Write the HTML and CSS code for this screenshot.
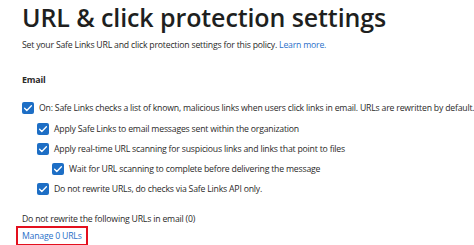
FILE: index.html
```html
<!DOCTYPE html>
<html>
<head>
<meta charset="utf-8">
<link rel="stylesheet" href="styles.css">
</head>
<body>
<div class="page">
  <h1 class="title">URL &amp; click protection settings</h1>
  <p class="intro">Set your Safe Links URL and click protection settings for this policy. <a class="link" href="#">Learn more.</a></p>
  <h2 class="section">Email</h2>
  <ul class="options">
    <li class="opt lvl0"><span class="cb"><svg viewBox="0 0 12 12"><path d="M2.6 6.3l2.2 2.2 4.6-4.8" fill="none" stroke="#fff" stroke-width="1.3" stroke-linecap="round" stroke-linejoin="round"/></svg></span><span>On: Safe Links checks a list of known, malicious links when users click links in email. URLs are rewritten by default.</span></li>
    <li class="opt lvl1"><span class="cb"><svg viewBox="0 0 12 12"><path d="M2.6 6.3l2.2 2.2 4.6-4.8" fill="none" stroke="#fff" stroke-width="1.3" stroke-linecap="round" stroke-linejoin="round"/></svg></span><span>Apply Safe Links to email messages sent within the organization</span></li>
    <li class="opt lvl1"><span class="cb"><svg viewBox="0 0 12 12"><path d="M2.6 6.3l2.2 2.2 4.6-4.8" fill="none" stroke="#fff" stroke-width="1.3" stroke-linecap="round" stroke-linejoin="round"/></svg></span><span>Apply real-time URL scanning for suspicious links and links that point to files</span></li>
    <li class="opt lvl2"><span class="cb"><svg viewBox="0 0 12 12"><path d="M2.6 6.3l2.2 2.2 4.6-4.8" fill="none" stroke="#fff" stroke-width="1.3" stroke-linecap="round" stroke-linejoin="round"/></svg></span><span>Wait for URL scanning to complete before delivering the message</span></li>
    <li class="opt lvl1"><span class="cb"><svg viewBox="0 0 12 12"><path d="M2.6 6.3l2.2 2.2 4.6-4.8" fill="none" stroke="#fff" stroke-width="1.3" stroke-linecap="round" stroke-linejoin="round"/></svg></span><span>Do not rewrite URLs, do checks via Safe Links API only.</span></li>
  </ul>
  <p class="label">Do not rewrite the following URLs in email (0)</p>
  <div class="manage"><a class="link" href="#">Manage 0 URLs</a></div>
</div>
</body>
</html>
```
FILE: styles.css
```css
html, body {
  margin: 0;
  padding: 0;
  background: #ffffff;
}
body {
  font-family: "Open Sans", "Noto Sans", sans-serif;
  color: #2b2a29;
  width: 474px;
  height: 245px;
  overflow: hidden;
}
.page {
  padding: 0 0 0 22px;
  display: flex;
  flex-direction: column;
  font-size: 8.7px;
  letter-spacing: -0.2px;
}
.title {
  margin: 1px 0 0 0;
  font-size: 25px;
  font-weight: 600;
  line-height: 32px;
  color: #201f1e;
  letter-spacing: -0.1px;
}
.intro {
  margin: 5px 0 0 0;
  line-height: 14px;
}
.link {
  color: #2b6fc9;
  text-decoration: none;
}
.section {
  margin: 21px 0 0 0;
  font-size: 8.9px;
  font-weight: 700;
  line-height: 14px;
}
.options {
  list-style: none;
  margin: 14px 0 0 0;
  padding: 0;
  display: flex;
  flex-direction: column;
  gap: 6px;
}
.opt {
  display: flex;
  align-items: center;
  gap: 5px;
  height: 14px;
  white-space: nowrap;
}
.opt:first-child { margin-bottom: 1px; }
.lvl1 { padding-left: 15px; }
.lvl2 { padding-left: 30px; }
.cb {
  width: 12px;
  height: 12px;
  border-radius: 2px;
  background: #1d6ec5;
  display: flex;
  flex: none;
}
.cb svg {
  width: 12px;
  height: 12px;
}
.label {
  margin: 16px 0 0 0;
  line-height: 14px;
}
.manage {
  margin: 0 0 0 -6px;
  align-self: flex-start;
  border: 2px solid #e3101e;
  padding: 1px 4px 1px 4px;
  line-height: 14px;
}
```
